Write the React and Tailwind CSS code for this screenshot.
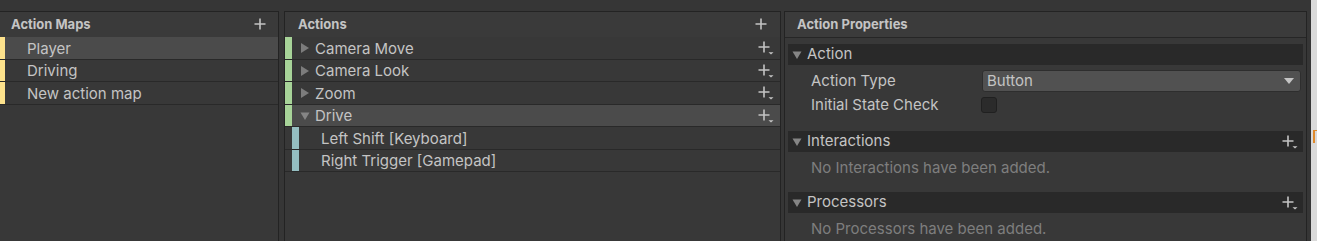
import React from 'react';

const TEXT = 'text-[#c4c4c4]';

const PlusIcon = ({ dropdown = false }) => (
    <svg width="16" height="14" viewBox="0 0 16 14" className="block">
        <path d="M6 0.5v11M0.5 6h11" stroke="#c4c4c4" strokeWidth="1.6" fill="none" />
        {dropdown && <path d="M10.5 11.3h5l-2.5 2.2z" fill="#c4c4c4" />}
    </svg>
);

const Triangle = ({ open }) => (
    <svg width="10" height="10" viewBox="0 0 10 10" className="block shrink-0">
        {open ? <path d="M0.5 1.5h9l-4.5 7.5z" fill="#858585" /> : <path d="M1 0v10l8-5z" fill="#7c7c7c" />}
    </svg>
);

const PanelHeader = ({ title, plus = true }) => (
    <div className="h-[25px] flex items-center justify-between pl-[11px] pr-[8px] bg-[#3a3a3a] shrink-0">
        <span className={`text-[13px] font-bold ${TEXT}`}>{title}</span>
        {plus && <PlusIcon />}
    </div>
);

const maps = [
    { name: 'Player', selected: true },
    { name: 'Driving' },
    { name: 'New action map' },
];

const actions = [
    { name: 'Camera Move' },
    { name: 'Camera Look' },
    { name: 'Zoom' },
    { name: 'Drive', selected: true, open: true },
];

const bindings = ['Left Shift [Keyboard]', 'Right Trigger [Gamepad]'];

const SectionHeader = ({ title, plus }) => (
    <div className="h-[21px] mx-[3px] bg-[#292929] flex items-center pl-[4px] pr-[5px]">
        <Triangle open />
        <span className={`ml-[5px] text-[15px] ${TEXT} flex-1`}>{title}</span>
        {plus && <PlusIcon dropdown />}
    </div>
);

export default function App() {
    return (
        <div className="w-[1317px] h-[241px] bg-[#363636] flex overflow-hidden font-['Inter','Noto_Sans',sans-serif]">
            <div className="w-[1311px] flex pt-[11px]">
                {/* Action Maps */}
                <div className="w-[279px] shrink-0 flex flex-col bg-[#383838] border-t border-r border-[#232323]">
                    <PanelHeader title="Action Maps" />
                    {maps.map((m) => (
                        <div key={m.name} className="h-[22.5px] shrink-0 flex border-b border-[#292929]">
                            <div className="w-[5px] bg-[#fde28c] shrink-0" />
                            <div className={`flex-1 flex items-center pt-[2px] pl-[22px] text-[15px] ${TEXT} ${m.selected ? 'bg-[#4b4b4b]' : ''}`}>
                                {m.name}
                            </div>
                        </div>
                    ))}
                </div>

                <div className="w-[5px] shrink-0" />

                {/* Actions */}
                <div className="w-[497px] shrink-0 flex flex-col bg-[#383838] border-t border-x border-[#232323]">
                    <div className="h-[25px] flex items-center justify-between pl-[13px] pr-[9px] bg-[#3a3a3a] shrink-0">
                        <span className={`text-[13px] font-bold ${TEXT}`}>Actions</span>
                        <PlusIcon />
                    </div>
                    {actions.map((a) => (
                        <div key={a.name} className={`h-[22.5px] shrink-0 flex border-b border-[#292929] ${a.selected ? 'bg-[#4b4b4b]' : ''}`}>
                            <div className="w-[7px] bg-[#a7d398] shrink-0" />
                            <div className="flex-1 flex items-center pt-[1px] pl-[8px] pr-[6px]">
                                <Triangle open={a.open} />
                                <span className={`ml-[5px] flex-1 pt-[1px] text-[15px] ${TEXT}`}>{a.name}</span>
                                <PlusIcon dropdown />
                            </div>
                        </div>
                    ))}
                    {bindings.map((b) => (
                        <div key={b} className="h-[22.5px] shrink-0 flex border-b border-[#292929]">
                            <div className="w-[7px] shrink-0" />
                            <div className="w-[7px] bg-[#95bec1] shrink-0" />
                            <div className={`flex-1 flex items-center pt-[2px] pl-[22px] text-[15px] ${TEXT}`}>{b}</div>
                        </div>
                    ))}
                </div>

                <div className="w-[3px] shrink-0" />

                {/* Action Properties */}
                <div className="w-[523px] shrink-0 flex flex-col bg-[#383838] border-t border-x border-[#232323]">
                    <div className="h-[26px] shrink-0 flex items-center pl-[12px] bg-[#3b3b3b] border-b border-[#262626]">
                        <span className={`text-[13px] font-bold ${TEXT}`}>Action Properties</span>
                    </div>
                    <div className="mt-[6px]">
                        <SectionHeader title="Action" />
                        <div className="h-[22px] mt-[5px] flex items-center pl-[26px] pr-[5px]">
                            <span className={`w-[171px] text-[15px] ${TEXT}`}>Action Type</span>
                            <div className="flex-1 h-[22px] rounded-[3px] bg-[#515151] border border-[#2e2e2e] flex items-center justify-between pl-[4px] pr-[6px]">
                                <span className={`text-[15px] ${TEXT}`}>Button</span>
                                <svg width="10" height="6" viewBox="0 0 10 6" className="block">
                                    <path d="M0 0h10l-5 6z" fill="#c4c4c4" />
                                </svg>
                            </div>
                        </div>
                        <div className="h-[22px] mt-[2px] flex items-center pl-[26px]">
                            <span className={`w-[170px] text-[15px] ${TEXT}`}>Initial State Check</span>
                            <div className="w-[16px] h-[16px] rounded-[3px] bg-[#2b2b2b] border border-[#202020]" />
                        </div>
                    </div>
                    <div className="mt-[15px]">
                        <SectionHeader title="Interactions" plus />
                        <div className="h-[20px] mt-[6px] flex items-center pl-[26px] text-[15px] text-[#7e7e7e]">
                            No Interactions have been added.
                        </div>
                    </div>
                    <div className="mt-[14px]">
                        <SectionHeader title="Processors" plus />
                        <div className="h-[20px] mt-[6px] flex items-center pl-[26px] text-[15px] text-[#7e7e7e]">
                            No Processors have been added.
                        </div>
                    </div>
                </div>
            </div>
            <div className="w-[6px] bg-[#dadada] flex flex-col">
                <div className="mt-[130px] ml-[2px] w-[4px] h-[13px] border-l-2 border-t border-[#e08a2c]" />
            </div>
        </div>
    );
}
